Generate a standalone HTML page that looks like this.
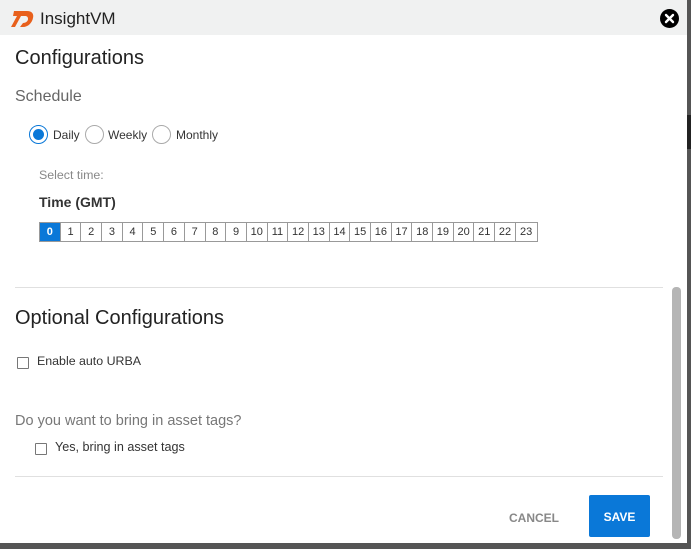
<!DOCTYPE html>
<html><head><style>
*{margin:0;padding:0;box-sizing:border-box}
body{width:691px;height:549px;overflow:hidden;background:#fff;font-family:"Liberation Sans",Arial,sans-serif;position:relative;color:#333}
.abs{position:absolute}
.hdr{left:0;top:0;width:687px;height:35px;background:#f0f1f1}
.t{white-space:nowrap}
.grid{left:39px;top:222px;display:flex;border:1px solid #999;height:20px}
.grid div{width:20.7px;border-right:1px solid #999;font-size:11px;text-align:center;line-height:18px;color:#333}
.grid div:last-child{border-right:none}
.radio{width:19px;height:19px;border:1px solid #aaa;border-radius:50%;background:#fff}
.cb{width:12px;height:12px;border:1.5px solid #777;border-radius:1px}
</style></head><body>
<div class="abs hdr"></div>
<svg class="abs" style="left:11px;top:10px" width="24" height="18" viewBox="0 0 24 18"><path d="M3 1h13c5 0 7 3 6 7-1 5-5 9-10 9H9l3-4c3 0 5-2 5-4 0-2-1-3-3-3H10L4 17H0L6 6H2z" fill="#e8601c"/></svg>
<div class="abs t" style="left:40px;top:9px;font-size:17px;color:#222">InsightVM</div>
<svg class="abs" style="left:660px;top:9px" width="19" height="19" viewBox="0 0 19 19"><circle cx="9.5" cy="9.5" r="9.5" fill="#000"/><path d="M6 6l7 7M13 6l-7 7" stroke="#fff" stroke-width="2.4" stroke-linecap="round"/></svg>
<div class="abs t" style="left:15px;top:47px;font-size:20px;color:#222">Configurations</div>
<div class="abs t" style="left:15px;top:88px;font-size:16px;color:#666">Schedule</div>
<div class="abs radio" style="left:29px;top:125px;border:1.5px solid #0a78d8"><div style="margin:2.5px;width:11px;height:11px;border-radius:50%;background:#0a78d8"></div></div>
<div class="abs t" style="left:53px;top:128px;font-size:12px">Daily</div>
<div class="abs radio" style="left:85px;top:125px"></div>
<div class="abs t" style="left:108px;top:128px;font-size:12px">Weekly</div>
<div class="abs radio" style="left:152px;top:125px"></div>
<div class="abs t" style="left:176px;top:128px;font-size:12px">Monthly</div>
<div class="abs t" style="left:39px;top:168px;font-size:12.4px;color:#888">Select time:</div>
<div class="abs t" style="left:39px;top:194px;font-size:14px;font-weight:bold;color:#333">Time (GMT)</div>
<div class="abs grid">
<div style="background:#0a78d8;color:#fff;font-weight:bold">0</div><div>1</div><div>2</div><div>3</div><div>4</div><div>5</div><div>6</div><div>7</div><div>8</div><div>9</div><div>10</div><div>11</div><div>12</div><div>13</div><div>14</div><div>15</div><div>16</div><div>17</div><div>18</div><div>19</div><div>20</div><div>21</div><div>22</div><div>23</div>
</div>
<div class="abs" style="left:15px;top:287px;width:648px;height:1px;background:#e0e0e0"></div>
<div class="abs t" style="left:15px;top:307px;font-size:20px;color:#222">Optional Configurations</div>
<div class="abs cb" style="left:17px;top:357px"></div>
<div class="abs t" style="left:37px;top:354px;font-size:12.4px">Enable auto URBA</div>
<div class="abs t" style="left:15px;top:413px;font-size:14.5px;color:#777">Do you want to bring in asset tags?</div>
<div class="abs cb" style="left:35px;top:443px"></div>
<div class="abs t" style="left:55px;top:440px;font-size:12.6px">Yes, bring in asset tags</div>
<div class="abs" style="left:15px;top:476px;width:648px;height:1px;background:#e0e0e0"></div>
<div class="abs t" style="left:509px;top:511px;font-size:12px;font-weight:bold;color:#888">CANCEL</div>
<div class="abs" style="left:589px;top:495px;width:61px;height:42px;background:#0a78d8;border-radius:2px;color:#fff;font-size:12px;font-weight:bold;text-align:center;line-height:44px">SAVE</div>
<div class="abs" style="left:672px;top:287px;width:9px;height:252px;background:#b5b5b5;border-radius:4px"></div>
<div class="abs" style="left:687px;top:0;width:4px;height:549px;background:#555"></div>
<div class="abs" style="left:687px;top:115px;width:4px;height:34px;background:#222"></div>
<div class="abs" style="left:0;top:543px;width:691px;height:6px;background:#555"></div>
</body></html>
